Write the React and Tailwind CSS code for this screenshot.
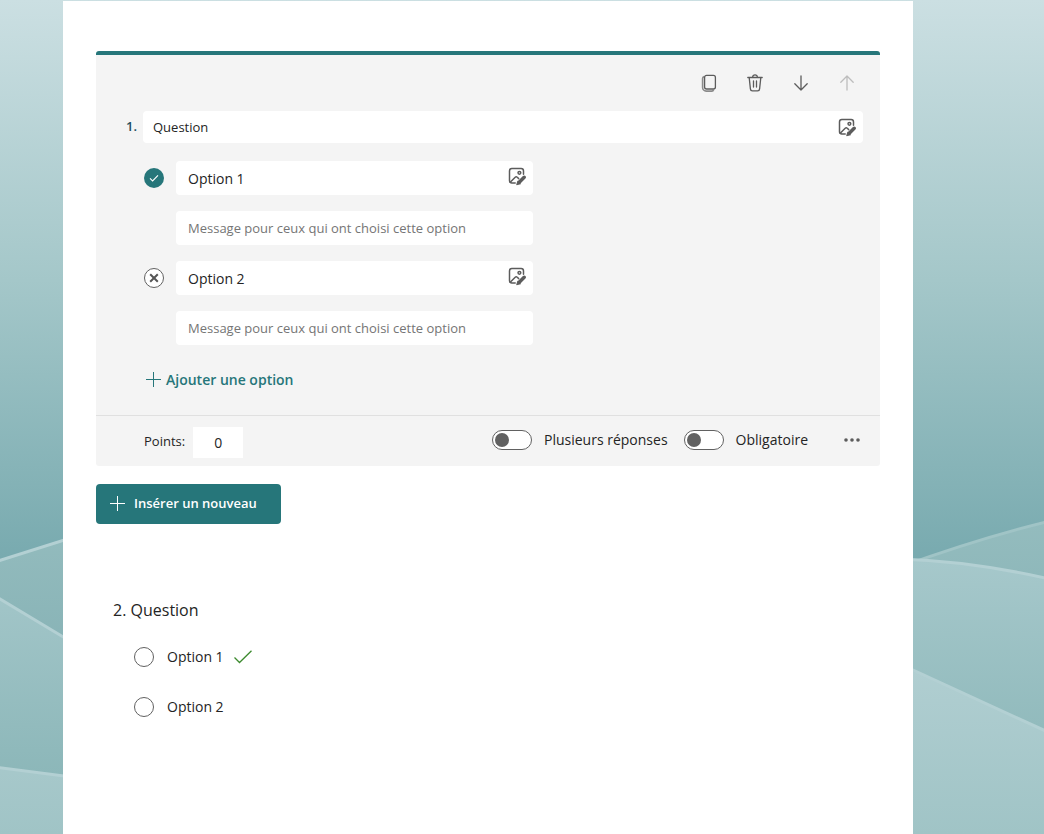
import { useState } from "react";

function CopyIcon() {
  return (
    <svg viewBox="0 0 20 20" className="size-5" fill="none" stroke="currentColor" strokeWidth="1.3">
      <path d="M5.2 3.6A2 2 0 0 0 3.6 5.6v8.9a3.6 3.6 0 0 0 3.6 3.6h5.6a2 2 0 0 0 1.8-1.4" stroke="#8a8a8a" strokeWidth="1.6" />
      <rect x="5.6" y="2.4" width="10.8" height="13.6" rx="2" />
    </svg>
  );
}

function TrashIcon() {
  return (
    <svg viewBox="0 0 20 20" className="size-5" fill="none" stroke="currentColor" strokeWidth="1.3" strokeLinecap="round">
      <path d="M2.8 4.5h14.4M7.6 4.2a2.4 2.4 0 0 1 4.8 0M4.2 4.6l1.2 11.3a2 2 0 0 0 2 1.9h5.2a2 2 0 0 0 2-1.9l1.2-11.3M8.5 8v6M11.5 8v6" />
    </svg>
  );
}

function ArrowDownIcon() {
  return (
    <svg viewBox="0 0 20 20" className="size-5" fill="none" stroke="currentColor" strokeWidth="1.3" strokeLinecap="round" strokeLinejoin="round">
      <path d="M10 3v14M3.8 10.8l6.2 6.2 6.2-6.2" />
    </svg>
  );
}

function ArrowUpIcon() {
  return (
    <svg viewBox="0 0 20 20" className="size-5" fill="none" stroke="currentColor" strokeWidth="1.3" strokeLinecap="round" strokeLinejoin="round">
      <path d="M10 17V3M3.8 9.2L10 3l6.2 6.2" />
    </svg>
  );
}

function ImageEditIcon() {
  return (
    <svg viewBox="0 0 20 20" className="size-5" fill="none" stroke="currentColor" strokeWidth="1.5" strokeLinecap="round">
      <path d="M8.2 17H4.9a2.4 2.4 0 0 1-2.4-2.4V4.9a2.4 2.4 0 0 1 2.4-2.4h9.2a2.4 2.4 0 0 1 2.4 2.4v3.4" />
      <path d="M3.2 16.2l5-4.9a1.5 1.5 0 0 1 2.1 0l1.4 1.3" />
      <circle cx="12.4" cy="6.8" r="1.4" />
      <path d="M12.2 16.2l5-4.9" strokeWidth="3.6" />
      <path d="M9.8 18.4l1-3.2 2.4 2.3z" fill="currentColor" strokeWidth="1" strokeLinejoin="round" />
    </svg>
  );
}

function PlusIcon() {
  return (
    <svg viewBox="0 0 16 16" className="size-4" fill="none" stroke="currentColor" strokeWidth="1">
      <path d="M7.5 0v15M0 7.5h15" />
    </svg>
  );
}

function Backdrop() {
  return (
    <svg
      viewBox="0 0 1044 834"
      preserveAspectRatio="none"
      className="col-start-1 row-start-1 size-full min-h-0"
      aria-hidden="true"
    >
      <defs>
        <linearGradient id="sky" gradientUnits="userSpaceOnUse" x1="0" y1="0" x2="0" y2="560">
          <stop offset="0" stopColor="#cbdfe2" />
          <stop offset="0.5" stopColor="#a4c7c9" />
          <stop offset="1" stopColor="#78aaaf" />
        </linearGradient>
        <linearGradient id="hillBack" gradientUnits="userSpaceOnUse" x1="0" y1="520" x2="0" y2="640">
          <stop offset="0" stopColor="#94bcbe" />
          <stop offset="1" stopColor="#89b4b7" />
        </linearGradient>
        <linearGradient id="hillMid" gradientUnits="userSpaceOnUse" x1="0" y1="560" x2="0" y2="775">
          <stop offset="0" stopColor="#a6c8cb" />
          <stop offset="1" stopColor="#8cb7b9" />
        </linearGradient>
        <linearGradient id="hillFront" gradientUnits="userSpaceOnUse" x1="0" y1="670" x2="0" y2="834">
          <stop offset="0" stopColor="#b0ced1" />
          <stop offset="1" stopColor="#a0c4c6" />
        </linearGradient>
      </defs>
      <rect width="1044" height="834" fill="url(#sky)" />
      <g stroke="#b3d0d3" strokeWidth="3">
        <path d="M-5 562L80 535V840H-5z" fill="url(#hillBack)" />
        <path d="M-5 596L80 647V840H-5z" fill="url(#hillMid)" />
        <path d="M-5 767L80 778V840H-5z" fill="url(#hillFront)" />
      </g>
      <g strokeWidth="3">
        <path d="M900 567Q980 538 1050 521V840H900z" fill="url(#hillBack)" stroke="#a0c4c6" />
        <path d="M900 559Q970 561 1050 579V840H900z" fill="url(#hillMid)" stroke="#b3d0d3" />
        <path d="M900 664L1050 733V840H900z" fill="url(#hillFront)" stroke="#b3d0d3" />
      </g>
    </svg>
  );
}

function ToolButton({ label, disabled, children }) {
  return (
    <button
      type="button"
      aria-label={label}
      disabled={disabled}
      className="flex size-8 items-center justify-center text-[#5c5c5c] disabled:text-[#bdbdbd]"
    >
      {children}
    </button>
  );
}

function Option({ name, correct, onToggle }) {
  return (
    <div className="grid grid-cols-[20px_minmax(0,357px)] gap-x-3 gap-y-4">
      <button
        type="button"
        aria-label={`Réponse correcte : ${name}`}
        aria-pressed={correct}
        onClick={onToggle}
        className={
          correct
            ? "flex size-5 items-center justify-center self-center rounded-full bg-[#26767a] text-white"
            : "flex size-5 items-center justify-center self-center rounded-full border border-[#616161] bg-white text-[#555]"
        }
      >
        <svg viewBox="0 0 10 10" className="size-[10px]" fill="none" stroke="currentColor">
          {correct ? (
            <path d="M1 5.4l2.6 2.5L9 2.4" strokeWidth="1.1" />
          ) : (
            <path d="M1.2 1.2l7.6 7.6M8.8 1.2L1.2 8.8" strokeWidth="2" />
          )}
        </svg>
      </button>
      <div className="flex h-[34px] items-center rounded bg-white pr-1">
        <input
          type="text"
          aria-label={name}
          defaultValue={name}
          className="h-full min-w-0 flex-1 pl-3 text-sm text-[#242424] outline-none"
        />
        <button type="button" aria-label="Insérer un média" className="flex h-8 w-6 items-center justify-center pb-1 text-[#5c5c5c]">
          <ImageEditIcon />
        </button>
      </div>
      <input
        type="text"
        aria-label={`Message pour ${name}`}
        placeholder="Message pour ceux qui ont choisi cette option"
        className="col-start-2 h-[34px] rounded bg-white px-3 text-[13px] text-[#242424] outline-none placeholder:text-[#757575]"
      />
    </div>
  );
}

function Toggle({ label }) {
  return (
    <label className="flex items-center gap-3 text-sm whitespace-nowrap text-[#242424]">
      <input
        type="checkbox"
        role="switch"
        className="flex h-5 w-10 shrink-0 appearance-none items-center rounded-full border border-[#616161] bg-white px-[2px] before:size-[14px] before:rounded-full before:bg-[#616161] checked:justify-end"
      />
      {label}
    </label>
  );
}

function QuestionEditor() {
  const [correct, setCorrect] = useState("Option 1");

  return (
    <section className="rounded-[3px] border-t-4 border-[#26767a] bg-[#f4f4f4]">
      {/* TOOLBAR */}
      <div className="flex justify-end gap-[14px] pt-3 pr-[17px]">
        <ToolButton label="Copier la question"><CopyIcon /></ToolButton>
        <ToolButton label="Supprimer la question"><TrashIcon /></ToolButton>
        <ToolButton label="Déplacer vers le bas"><ArrowDownIcon /></ToolButton>
        <ToolButton label="Déplacer vers le haut" disabled><ArrowUpIcon /></ToolButton>
      </div>

      {/* TITLE */}
      <div className="mt-3 flex items-center pr-[17px] pl-[30px]">
        <label htmlFor="title" className="w-[17px] text-[13px] font-semibold text-[#1f4e5f]">
          1.
        </label>
        <div className="flex h-8 flex-1 items-center rounded bg-white pr-1">
          <input
            id="title"
            type="text"
            defaultValue="Question"
            className="h-full min-w-0 flex-1 pl-[10px] text-[13px] text-[#242424] outline-none"
          />
          <button type="button" aria-label="Insérer un média" className="flex h-8 w-6 items-center justify-center text-[#5c5c5c]">
            <ImageEditIcon />
          </button>
        </div>
      </div>

      {/* OPTIONS */}
      <div className="mt-[18px] flex flex-col gap-4 pr-4 pl-12">
        {["Option 1", "Option 2"].map((name) => (
          <Option key={name} name={name} correct={correct === name} onToggle={() => setCorrect(name)} />
        ))}
      </div>
      <button type="button" className="mt-[19px] mb-[19px] ml-[50px] flex h-8 items-center gap-1 text-sm font-semibold text-[#26767a]">
        <PlusIcon />
        Ajouter une option
      </button>

      {/* FOOTER */}
      <div className="flex min-h-[51px] items-center border-t border-[#e0e0e0] pr-3 pb-[2px] pl-12">
        <label htmlFor="points" className="mt-1 text-[13px] text-[#242424]">Points:</label>
        <input
          id="points"
          type="text"
          defaultValue="0"
          className="mt-1 ml-2 h-[31px] w-[50px] bg-white text-center text-sm text-[#242424] outline-none"
        />
        <div className="ml-auto flex items-center gap-4">
          <Toggle label="Plusieurs réponses" />
          <Toggle label="Obligatoire" />
        </div>
        <button type="button" aria-label="Autres paramètres" className="ml-7 flex size-8 items-center justify-center text-[#5c5c5c]">
          <svg viewBox="0 0 16 4" className="h-1 w-4" fill="currentColor">
            <circle cx="2" cy="2" r="1.8" />
            <circle cx="8" cy="2" r="1.8" />
            <circle cx="14" cy="2" r="1.8" />
          </svg>
        </button>
      </div>
    </section>
  );
}

function QuestionPreview() {
  return (
    <fieldset className="mt-[74px] pl-[17px]">
      <legend className="float-left text-base text-[#242424]">2. Question</legend>
      <div className="clear-both flex flex-col gap-[30px] pt-[25px] pl-[21px] text-sm text-[#242424]">
        <label className="flex h-5 items-center">
          <input type="radio" name="q2" className="mr-[13px] size-5 appearance-none rounded-full border border-[#616161] checked:border-[6px]" />
          Option 1
          <svg viewBox="0 0 18 14" className="ml-[10px] h-[14px] w-[18px]" fill="none" stroke="#3c8a2e" strokeWidth="1.3">
            <path d="M.5 7.5l5 5L17.5.7" />
          </svg>
        </label>
        <label className="flex h-5 items-center">
          <input type="radio" name="q2" className="mr-[13px] size-5 appearance-none rounded-full border border-[#616161] checked:border-[6px]" />
          Option 2
        </label>
      </div>
    </fieldset>
  );
}

export default function App() {
  return (
    <div className="grid min-h-screen grid-cols-1 overflow-hidden font-['Open_Sans','Noto_Sans',sans-serif]">
      <Backdrop />
      <main className="z-10 col-start-1 row-start-1 mt-px mr-[131px] ml-[63px] bg-white px-[33px] pt-[50px] pb-10">
        <QuestionEditor />
        <button
          type="button"
          className="mt-[18px] flex h-10 items-center gap-2 rounded bg-[#26767a] pr-6 pl-[14px] text-[13px] font-semibold text-white"
        >
          <PlusIcon />
          Insérer un nouveau
        </button>
        <QuestionPreview />
      </main>
    </div>
  );
}
